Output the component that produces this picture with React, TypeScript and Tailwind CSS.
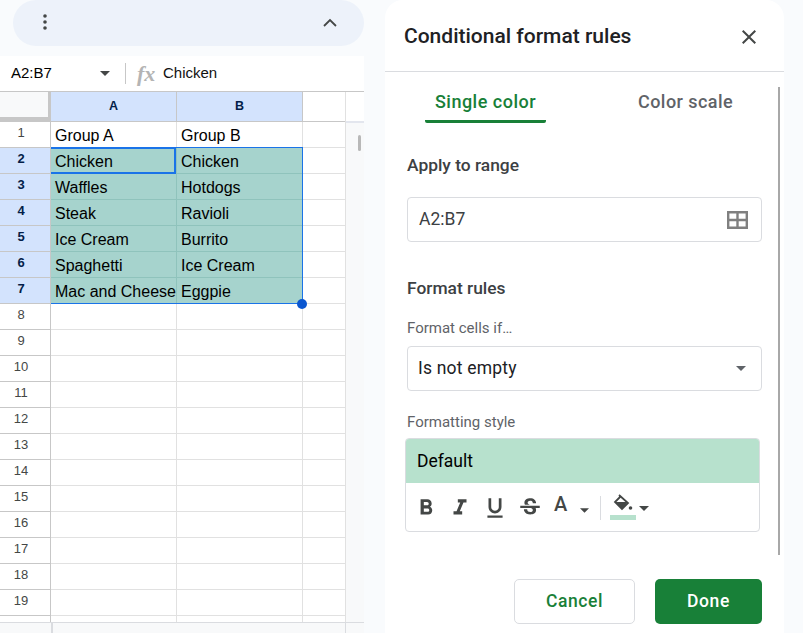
import React from "react";
import { MdFormatBold, MdFormatItalic, MdFormatUnderlined, MdStrikethroughS, MdClose } from "react-icons/md";

const rows: [string, string][] = [
  ["Group A", "Group B"],
  ["Chicken", "Chicken"],
  ["Waffles", "Hotdogs"],
  ["Steak", "Ravioli"],
  ["Ice Cream", "Burrito"],
  ["Spaghetti", "Ice Cream"],
  ["Mac and Cheese", "Eggpie"],
  ...Array.from({ length: 12 }, () => ["", ""] as [string, string]),
];

function Caret({ className }: { className: string }) {
  return (
    <svg viewBox="0 0 10 5" className={className}>
      <path d="M0 0h10L5 5z" fill="currentColor" />
    </svg>
  );
}

function Sheet() {
  return (
    <div className="w-[364px] shrink-0 flex flex-col font-['Liberation_Sans',Arial,sans-serif]">
      <div className="ml-[13px] h-[46px] shrink-0 rounded-[23px] bg-[#edf2fa] flex items-center justify-between pl-[30px] pr-[27px] pb-[2px]">
        <svg viewBox="0 0 4 16" className="w-[4px] h-[16px] text-[#444746]">
          <circle cx="2" cy="2" r="1.8" fill="currentColor" />
          <circle cx="2" cy="8" r="1.8" fill="currentColor" />
          <circle cx="2" cy="14" r="1.8" fill="currentColor" />
        </svg>
        <svg viewBox="0 0 14 9" className="w-[14px] h-[9px] text-[#444746]">
          <path d="M1 8l6-6 6 6" fill="none" stroke="currentColor" strokeWidth="1.8" />
        </svg>
      </div>
      <div className="h-[10px] shrink-0" />
      <div className="h-[36px] shrink-0 bg-white flex items-center border-b border-[#c7c7c7]">
        <span className="ml-[11px] w-[89px] text-[15px] text-black">A2:B7</span>
        <Caret className="w-[10px] h-[5px] text-[#444746]" />
        <div className="ml-[15px] w-px h-[21px] bg-[#c7c7c7]" />
        <span className="ml-[11px] w-[26px] text-[22px] leading-none font-bold italic text-[#b4b4b4] font-['Liberation_Serif',serif]">fx</span>
        <span className="text-[15px] text-[#111]">Chicken</span>
      </div>
      <div className="relative flex-1 flex flex-col bg-white overflow-hidden">
        <div className="flex-1 flex overflow-hidden">
          <div className="w-[345px] shrink-0">
            <div className="flex h-[30px]">
              <div className="w-[51px] bg-[#f8f9fa] border-r-[3px] border-b-[5px] border-[#c7c7c7]" />
              <div className="w-[126px] bg-[#d3e3fd] border-r border-b border-[#c7c7c7] flex items-center justify-center text-[12.5px] font-bold text-[#041e49]">A</div>
              <div className="w-[126px] bg-[#d3e3fd] border-r border-b border-[#c7c7c7] flex items-center justify-center text-[12.5px] font-bold text-[#041e49]">B</div>
              <div className="w-[42px] border-b border-[#c7c7c7]" />
            </div>
            {rows.map((r, i) => {
              const sel = i >= 1 && i <= 6;
              return (
                <div key={i} className="flex h-[26px]">
                  <div className={sel ? "w-[51px] pr-[8px] bg-[#d3e3fd] border-r border-b border-[#c7c7c7] flex items-center justify-center text-[13px] font-bold text-[#041e49] pb-[4px]" : "w-[51px] pr-[8px] bg-white border-r border-b border-[#c7c7c7] flex items-center justify-center text-[13px] text-[#444746] pb-[4px]"}>{i + 1}</div>
                  <div className={sel ? "w-[126px] pl-[4px] bg-[#a6d3cd] border-r border-b border-[#8fc3bc] overflow-hidden whitespace-nowrap text-[16px] leading-[27px] text-black" : "w-[126px] pl-[4px] border-r border-b border-[#e1e1e1] overflow-hidden whitespace-nowrap text-[16px] leading-[27px] text-black"}>{r[0]}</div>
                  <div className={sel ? "w-[126px] pl-[4px] bg-[#a6d3cd] border-r border-b border-[#8fc3bc] overflow-hidden whitespace-nowrap text-[16px] leading-[27px] text-black" : "w-[126px] pl-[4px] border-r border-b border-[#e1e1e1] overflow-hidden whitespace-nowrap text-[16px] leading-[27px] text-black"}>{r[1]}</div>
                  <div className="w-[42px] border-b border-[#e1e1e1]" />
                </div>
              );
            })}
            <div className="flex h-[6px]">
              <div className="w-[51px] border-r border-[#c7c7c7]" />
              <div className="w-[126px] border-r border-[#e1e1e1]" />
              <div className="w-[126px] border-r border-[#e1e1e1]" />
            </div>
          </div>
          <div className="w-[19px] shrink-0 bg-[#f8f9fa] border-l border-[#e1e1e1] flex flex-col">
            <div className="h-[31px] bg-white border-b-2 border-[#e3e6ee]" />
            <div className="ml-[12px] mt-[12px] w-[3px] h-[16px] rounded-[2px] bg-[#b8b8b8]" />
          </div>
        </div>
        <div className="h-[11px] shrink-0 bg-[#f8f9fa] border-t border-[#dadce0] flex">
          <div className="w-[53px] border-r-2 border-[#dadce0]" />
          <div className="w-[293px] border-r border-[#dadce0]" />
        </div>
        <div className="absolute left-[51px] top-[55px] w-[252px] h-[157px] border border-l-0 border-[#1a73e8]" />
        <div className="absolute left-[51px] top-[55px] w-[125px] h-[27px] border-2 border-l-0 border-[#1a73e8]" />
        <div className="absolute left-[297px] top-[207px] w-[10px] h-[10px] rounded-full bg-[#0b57d0]" />
      </div>
    </div>
  );
}

function Panel() {
  return (
    <div className="relative ml-[21px] w-[399px] shrink-0 bg-white rounded-t-[18px] flex flex-col font-['Roboto',sans-serif]">
      <div className="h-[72px] shrink-0 border-b border-[#dadce0] flex items-center justify-between pl-[19px] pr-[23px]">
        <span className="mt-[2px] text-[21px] font-medium text-[#202124]">Conditional format rules</span>
        <MdClose className="mt-[2px] w-[24px] h-[24px] text-[#444746]" />
      </div>
      <div className="h-[51px] shrink-0 flex relative">
        <div className="ml-[40px] w-[121px] h-[51px] border-b-[3px] border-[#188038] rounded-b-[2px] text-center text-[18px] font-medium text-[#188038] leading-[60px] tracking-[0.5px]">Single color</div>
        <div className="ml-[92px] text-[18px] font-medium text-[#5f6368] leading-[60px] tracking-[0.45px]">Color scale</div>
      </div>
      <div className="pl-[22px] pr-[22px] flex flex-col">
        <div className="mt-[32px] h-[20px] leading-[20px] text-[17.4px] font-medium text-[#3c4043]">Apply to range</div>
        <div className="mt-[22px] h-[45px] border border-[#dadce0] rounded-[4px] flex items-center justify-between pl-[11px] pr-[13px]">
          <span className="text-[17.5px] text-[#3c4043]">A2:B7</span>
          <svg viewBox="0 0 21 18" className="w-[21px] h-[18px] text-[#808080]">
            <path d="M1.2 1.2h18.6v15.6H1.2zM10.5 1v16M1 9h19" fill="none" stroke="currentColor" strokeWidth="2.4" />
          </svg>
        </div>
        <div className="mt-[36px] h-[20px] leading-[20px] text-[17.4px] font-medium text-[#3c4043]">Format rules</div>
        <div className="mt-[21px] h-[18px] leading-[18px] text-[15px] text-[#5f6368]">Format cells if…</div>
        <div className="mt-[9px] h-[45px] border border-[#dadce0] rounded-[4px] flex items-center justify-between pl-[10px] pr-[15px]">
          <span className="text-[17.5px] text-[#202124] tracking-[0.2px]">Is not empty</span>
          <Caret className="w-[10px] h-[5px] text-[#5f6368]" />
        </div>
        <div className="mt-[22px] h-[18px] leading-[18px] text-[15px] text-[#5f6368]">Formatting style</div>
        <div className="-ml-[2px] w-[355px] mt-[7px] h-[94px] border border-[#dadce0] rounded-[4px] overflow-hidden flex flex-col">
          <div className="h-[44px] shrink-0 bg-[#b7e1cd] flex items-center pl-[11px] text-[17.5px] text-black">Default</div>
          <div className="flex-1 flex items-center pl-[7px] pt-[2px] text-[#444746]">
            <MdFormatBold className="w-[26px] h-[26px]" />
            <MdFormatItalic className="ml-[8px] w-[26px] h-[26px]" />
            <MdFormatUnderlined className="ml-[9px] w-[26px] h-[26px]" />
            <MdStrikethroughS className="ml-[9px] w-[26px] h-[26px]" />
            <span className="ml-[11px] -mt-[8px] w-[16px] text-[20px] font-medium leading-none">A</span>
            <Caret className="ml-[10px] mt-[4px] w-[9px] h-[5px]" />
            <div className="ml-[11px] w-px h-[24px] bg-[#dadce0]" />
            <div className="ml-[9px] w-[26px] flex flex-col items-center -mt-[3px]">
              <svg viewBox="0 0 20 18" className="w-[20px] h-[18px]">
                <path d="M6 1l9 8-6 6-7-7 5-5" fill="none" stroke="currentColor" strokeWidth="1.8" />
                <path d="M2 8h13l-6 7z" fill="currentColor" />
                <circle cx="17.5" cy="14" r="1.8" fill="currentColor" />
              </svg>
              <div className="mt-[3px] w-[26px] h-[5px] bg-[#b7e1cd]" />
            </div>
            <Caret className="ml-[3px] w-[10px] h-[5px]" />
          </div>
        </div>
      </div>
      <div className="mt-[47px] flex justify-end gap-[20px] pr-[22px]">
        <div className="w-[121px] h-[45px] border border-[#dadce0] rounded-[5px] flex items-center justify-center text-[17.5px] font-medium text-[#188038] tracking-[0.6px]">Cancel</div>
        <div className="w-[107px] h-[45px] bg-[#188038] rounded-[5px] flex items-center justify-center text-[17.5px] font-medium text-white tracking-[0.6px]">Done</div>
      </div>
      <div className="absolute left-[393px] top-[87px] w-[2px] h-[468px] bg-[#a8a8a8]" />
    </div>
  );
}

export default function App() {
  return (
    <div className="w-[803px] h-[633px] bg-[#f9fbfd] flex overflow-hidden">
      <Sheet />
      <Panel />
    </div>
  );
}
